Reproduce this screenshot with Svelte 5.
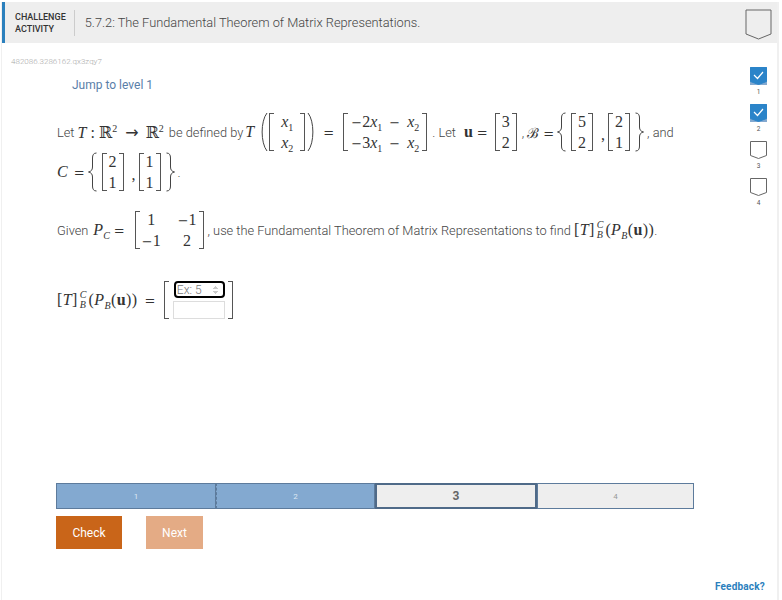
<script>
  const levels = [
    { n: 1, state: 'done' },
    { n: 2, state: 'done' },
    { n: 3, state: 'current' },
    { n: 4, state: 'todo' }
  ];
  const rail = [
    { n: 1, done: true },
    { n: 2, done: true },
    { n: 3, done: false },
    { n: 4, done: false }
  ];
</script>

{#snippet mat(rows, kind = '')}
  <span class="mat {kind}" style="grid-template-columns: repeat({rows[0].length}, auto)">
    {#each rows.flat() as cell}
      <span class="cell">{@render cell()}</span>
    {/each}
  </span>
{/snippet}

{#snippet brace(flip)}
  <svg class="delim br" class:flip width="11" height="40" viewBox="0 0 11 40">
    <path d="M9.500 1C6.500 1 5.500 3 5.500 6V15C5.500 18 4 19.500 1.500 20C4 20.500 5.500 22 5.500 25V34C5.500 37 6.500 39 9.500 39" />
  </svg>
{/snippet}

{#snippet paren(flip)}
  <svg class="delim" class:flip width="9" height="40" viewBox="0 0 9 40">
    <path d="M8 1C1.500 9 1.500 31 8 39" />
  </svg>
{/snippet}

{#snippet eq()}<span class="op">=</span>{/snippet}
{#snippet minus()}<span class="op">&minus;</span>{/snippet}

{#snippet n2()}2{/snippet}
{#snippet n1()}1{/snippet}
{#snippet n3()}3{/snippet}
{#snippet n5()}5{/snippet}
{#snippet m1()}{@render minus()}1{/snippet}
{#snippet x1()}<i>x</i><sub>1</sub>{/snippet}
{#snippet x2()}<i>x</i><sub>2</sub>{/snippet}
{#snippet e1()}{@render minus()}2<i>x</i><sub>1</sub> {@render minus()} <i>x</i><sub>2</sub>{/snippet}
{#snippet e2()}{@render minus()}3<i>x</i><sub>1</sub> {@render minus()} <i>x</i><sub>2</sub>{/snippet}

{#snippet tcb()}
  <span class="m tcb">[<i>T</i>]</span><span class="stack"><i>C</i><i>B</i></span><span class="m tcb">(<i>P</i><sub><i>B</i></sub>(<b>u</b>))</span>
{/snippet}

<div class="page">
  <div class="card">
    <header>
      <div class="tag">CHALLENGE<br />ACTIVITY</div>
      <h1>5.7.2: The Fundamental Theorem of Matrix Representations.</h1>
      <svg class="big" width="27" height="31" viewBox="0 0 27 31">
        <path d="M1 1H26V25L13.500 30L1 25Z" />
      </svg>
    </header>

    <div class="body">
      <main>
        <div class="code">482086.3286162.qx3zqy7</div>
        <a class="jump" href="#top">Jump to level 1</a>

        <div class="line first">
          <span>Let</span><span class="m tt"><i>T</i> : ℝ<sup>2</sup><span class="arrow">→</span>ℝ<sup>2</sup></span>
          <span class="tb">be defined by</span><span class="m t2"><i>T</i></span>
          {@render paren(false)}
          {@render mat([[x1], [x2]], 'pad')}
          {@render paren(true)}
          <span class="m rel">{@render eq()}</span>
          {@render mat([[e1], [e2]], 'expr')}
          <span class="after let">. Let</span><span class="m tu"><b>u</b> {@render eq()}</span>
          <span class="sp5"></span>
          {@render mat([[n3], [n2]])}
          <span class="after comma-text">,</span><span class="m tt"><span class="cal">ℬ</span> {@render eq()}</span>
          {@render brace(false)}
          {@render mat([[n5], [n2]])}
          <span class="m comma">,</span>
          {@render mat([[n2], [n1]])}
          {@render brace(true)}
          <span>, and</span>
        </div>

        <div class="line second">
          <span class="m"><i class="cee">C</i> {@render eq()}</span>
          {@render brace(false)}
          {@render mat([[n2], [n1]])}
          <span class="m comma">,</span>
          {@render mat([[n1], [n1]])}
          {@render brace(true)}
          <span>.</span>
        </div>

        <div class="line given">
          <span>Given</span><span class="m tp"><i>P</i><sub><i>C</i></sub> {@render eq()}</span>
          <span class="sp8"></span>
          {@render mat([[n1, m1], [m1, n2]], 'two')}
          <span class="after">, use the Fundamental Theorem of Matrix Representations to find&nbsp;</span>
          {@render tcb()}<span>.</span>
        </div>

        <div class="line answer">
          {@render tcb()}<span class="m rel">{@render eq()}</span>
          <span class="mat inputs">
            <input type="number" class="active" placeholder="Ex: 5" />
            <input type="text" />
          </span>
        </div>

        <div class="levels">
          {#each levels as l}
            <div class="lvl {l.state}">{l.n}</div>
          {/each}
        </div>

        <div class="actions">
          <button class="check">Check</button>
          <button class="next">Next</button>
        </div>
      </main>

      <aside>
        {#each rail as r}
          <div class="mark">
            <svg width="17" height="18" viewBox="0 0 17 18" class:done={r.done}>
              <path class="shape" d="M.5 .5H16.500V14.500L8.500 17.500L.5 14.500Z" />
              {#if r.done}
                <path class="tick" d="M4 8L7.500 11.500L13 5" />
              {/if}
            </svg>
            <span>{r.n}</span>
          </div>
        {/each}
      </aside>
    </div>

    <a class="feedback" href="#top">Feedback?</a>
  </div>
</div>

<style>
  :global(body) {
    background: #fff;
  }

  .page {
    height: 600px;
    overflow: hidden;
    padding-top: 2px;
    box-sizing: border-box;
    font-family: Roboto, "Liberation Sans", sans-serif;
    font-weight: 300;
    font-size: 12.800px;
    color: #444;
  }

  .card {
    width: 778px;
    height: 598px;
    margin-left: 1px;
    border-left: 1px solid #f0f0f0;
    border-right: 2px solid #f0f0f0;
    box-sizing: border-box;
    display: flex;
    flex-direction: column;
    position: relative;
  }

  header {
    height: 41px;
    flex: none;
    background: #eee;
    border-left: 3px solid #2b80bd;
    display: flex;
    align-items: center;
  }

  .tag {
    font-size: 9px;
    font-weight: 500;
    line-height: 12px;
    color: #333;
    padding: 0 8px 0 10px;
    border-right: 1px solid #ccc;
    height: 26px;
    display: flex;
    align-items: center;
  }

  h1 {
    margin: 0 0 0 10px;
    font-size: 12.800px;
    font-weight: 300;
    color: #444;
  }

  .big {
    margin-left: auto;
    margin-right: 5px;
    margin-top: 3px;
  }

  .big path {
    fill: none;
    stroke: #666;
    stroke-width: 1;
  }

  .body {
    flex: 1;
    display: flex;
    min-height: 0;
  }

  main {
    flex: 1;
    display: flex;
    flex-direction: column;
    align-items: flex-start;
    padding: 13px 0 0 9px;
    position: relative;
  }

  .code {
    font-size: 8px;
    color: #aaa;
    height: 11px;
    line-height: 11px;
  }

  .jump {
    margin: 11px 0 0 61px;
    font-size: 12px;
    font-weight: 400;
    color: #5a7ea8;
    text-decoration: none;
  }

  .line {
    display: flex;
    align-items: center;
    margin-left: 46px;
    white-space: nowrap;
    height: 40px;
  }

  .first {
    margin-top: 20px;
  }

  .second {
    margin-top: 0;
  }

  .given {
    margin-top: 18px;
  }

  .answer {
    margin-top: 30px;
  }

  .m {
    font-family: "Liberation Serif", "DejaVu Serif", serif;
    font-weight: 400;
    font-size: 16px;
    color: #333;
    white-space: pre;
  }

  .tt {
    margin-left: 3px;
  }

  .tb {
    margin-left: 5px;
  }

  .tu {
    margin-left: 8px;
  }

  .tp {
    margin-left: 5px;
  }

  .t2 {
    margin: 0 5px 0 2px;
  }

  .tcb {
    letter-spacing: 0.4px;
  }

  .cal {
    font-size: 14px;
  }

  .cee {
    margin-right: 2px;
  }

  .op {
    font-family: "DejaVu Sans", sans-serif;
    font-size: 13px;
    letter-spacing: 0;
  }

  .arrow {
    font-family: "DejaVu Sans", sans-serif;
    font-size: 16px;
    margin: 0 7px 0 8px;
  }

  sub {
    font-size: 10px;
    line-height: 0;
  }

  sup {
    font-size: 10px;
    line-height: 0;
  }

  .sp5 {
    width: 5px;
  }

  .sp8 {
    width: 8px;
  }

  .rel {
    margin: 0 7px;
  }

  .comma {
    margin: 6px 1px 0 6px;
  }

  .after {
    margin-left: 2px;
  }

  .let,
  .comma-text {
    margin-left: 3px;
  }

  .delim {
    flex: none;
  }

  .br {
    margin: 0 2px;
  }

  .delim path {
    fill: none;
    stroke: #444;
    stroke-width: 1;
  }

  .flip {
    transform: scaleX(-1);
  }

  .mat {
    display: inline-grid;
    justify-items: center;
    align-items: center;
    grid-auto-rows: 21px;
    column-gap: 18px;
    padding: 0 7px;
    margin: 0 2px;
    position: relative;
    font-family: "Liberation Serif", "DejaVu Serif", serif;
    font-weight: 400;
    font-size: 16px;
    color: #333;
  }

  .pad {
    padding: 0 12px;
    margin: 0 2px 0 1px;
  }

  .expr {
    padding: 0 8px;
    word-spacing: 3px;
  }

  .two {
    column-gap: 17px;
  }

  .mat::before,
  .mat::after {
    content: "";
    position: absolute;
    top: 2px;
    bottom: 2px;
    width: 4px;
    border: 1px solid #555;
  }

  .mat::before {
    left: 0;
    border-right: none;
  }

  .mat::after {
    right: 0;
    border-left: none;
  }

  .cell {
    white-space: pre;
  }

  .stack {
    display: inline-flex;
    flex-direction: column;
    font-family: "Liberation Serif", "DejaVu Serif", serif;
    font-size: 10px;
    line-height: 10px;
    font-weight: 400;
    color: #333;
    margin: 0 2px;
  }

  .inputs {
    display: flex;
    flex-direction: column;
    gap: 3px;
    padding: 0 8px 0 9px;
    height: 42px;
    justify-content: center;
  }

  input {
    box-sizing: border-box;
    font-family: Roboto, sans-serif;
    font-size: 12px;
    font-weight: 300;
    margin: 0;
    border-radius: 0;
    background: #fff;
  }

  input::placeholder {
    color: #777;
  }

  .active {
    width: 51px;
    height: 17px;
    padding: 0 0 0 1px;
    border: 2px solid #000;
    border-radius: 4px;
  }

  .active::-webkit-inner-spin-button {
    opacity: 0.45;
    transform: scale(0.7);
  }

  input[type="text"] {
    width: 52px;
    height: 18px;
    border: 1px solid #ddd;
  }

  .levels {
    position: absolute;
    top: 440px;
    left: 0;
    margin-left: 54px;
    display: grid;
    grid-template-columns: 160px 159px 162px 157px;
    height: 26px;
  }

  .lvl {
    display: flex;
    align-items: center;
    justify-content: center;
    box-sizing: border-box;
    font-size: 8px;
    font-weight: 400;
    border: 1px solid #5d7b9c;
  }

  .done {
    background: #83a9d0;
    color: #dde8f3;
  }

  .done + .done {
    border-left: 1px dashed #5d7b9c;
  }

  .current {
    background: #eee;
    border: 2px solid #4f6a88;
    color: #666;
    font-size: 12px;
    font-weight: 700;
  }

  .todo {
    background: #eee;
    color: #999;
  }

  .actions {
    position: absolute;
    top: 473px;
    left: 54px;
    display: flex;
    gap: 24px;
  }

  button {
    height: 33px;
    border: none;
    color: #fff;
    font-family: Roboto, sans-serif;
    font-size: 12px;
    font-weight: 400;
    padding: 0;
  }

  .check {
    width: 66px;
    background: #c96519;
  }

  .next {
    width: 57px;
    background: #e4ab85;
  }

  .feedback {
    position: absolute;
    top: 579px;
    right: 12px;
    font-size: 10px;
    font-weight: 700;
    color: #2b80bd;
    text-decoration: none;
    letter-spacing: 0.2px;
  }

  aside {
    width: 27px;
    flex: none;
    padding-top: 24px;
    display: flex;
    flex-direction: column;
    align-items: flex-start;
  }

  .mark {
    width: 17px;
    height: 37px;
    display: flex;
    flex-direction: column;
    align-items: center;
    font-size: 6.500px;
    font-weight: 400;
    color: #555;
    gap: 3px;
  }

  .shape {
    fill: #fff;
    stroke: #666;
  }

  svg.done .shape {
    fill: #2b84c9;
    stroke: #2b84c9;
  }

  .tick {
    fill: none;
    stroke: #fff;
    stroke-width: 1.200;
  }
</style>
